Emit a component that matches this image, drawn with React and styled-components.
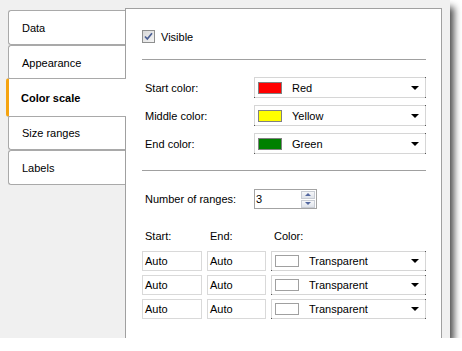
import React from "react";
import styled, { createGlobalStyle } from "styled-components";

const Global = createGlobalStyle`
  html, body { margin: 0; padding: 0; background: #ffffff; }
  body { font-family: "Liberation Sans", Arial, sans-serif; font-size: 11px; color: #000; }
`;

const Window = styled.div`
  width: 450px;
  height: 338px;
  background: #f0f0f0;
  display: flex;
  align-items: stretch;
  box-sizing: border-box;
  padding-top: 8px;
  padding-right: 8px;
  box-shadow: 5px 6px 7px -1px rgba(0, 0, 0, 0.7);
`;

const TabColumn = styled.div`
  width: 117px;
  margin-left: 8px;
  padding-top: 2px;
  display: flex;
  flex-direction: column;
  flex-shrink: 0;
`;

const Tab = styled.div`
  height: ${(p) => (p.$active ? 39 : 35)}px;
  box-sizing: border-box;
  display: flex;
  align-items: center;
  background: #ffffff;
  border: 1px solid #a9a9a9;
  border-right: none;
  border-radius: 3px 0 0 3px;
  padding-left: 13px;
  font-size: 11px;
  ${(p) =>
    p.$active &&
    `
    position: relative;
    z-index: 1;
    margin: -2px -1px -2px -2px;
    border-left: 3px solid #f5a30f;
    padding-left: 12px;
    font-weight: bold;
  `}
`;

const Panel = styled.div`
  flex: 1;
  background: #ffffff;
  border: 1px solid #a0a0a0;
  border-bottom: none;
  padding: 21px 15px 0 16px;
  display: flex;
  flex-direction: column;
`;

const CheckRow = styled.label`
  display: flex;
  align-items: center;
  gap: 6px;
  height: 13px;
`;

const CheckBox = styled.span`
  width: 13px;
  height: 13px;
  box-sizing: border-box;
  border: 1px solid #8e8f8f;
  background: linear-gradient(135deg, #d8d8d8, #f4f4f4);
  display: flex;
  align-items: center;
  justify-content: center;
`;

const Separator = styled.div`
  height: 1px;
  background: #a0a0a0;
  margin-top: ${(p) => p.$top}px;
`;

const ColorRows = styled.div`
  display: flex;
  flex-direction: column;
  gap: 7px;
  margin-top: 17px;
`;

const FieldRow = styled.div`
  display: flex;
  align-items: center;
  height: ${(p) => p.$h || 21}px;
  margin-top: ${(p) => p.$top || 0}px;
`;

const Label = styled.span`
  width: 109px;
  padding-left: 3px;
  flex-shrink: 0;
`;

const Dropdown = styled.div`
  position: relative;
  flex: 1;
  height: 100%;
  box-sizing: border-box;
  border: 1px solid #d6d6d6;
  display: flex;
  align-items: center;
  padding: 0 6px 0 3px;
  &::before, &::after {
    content: "";
    position: absolute;
    bottom: -1px;
    width: 1px;
    height: 1px;
    background: #555;
  }
  &::before { left: -1px; }
  &::after { right: -1px; box-shadow: 0 -${(p) => p.$h || 20}px 0 #555; }
`;

const Swatch = styled.span`
  width: 24px;
  height: 12px;
  box-sizing: border-box;
  border: 1px solid ${(p) => (p.$color === "#ffffff" ? "#a0a0a0" : "#808080")};
  background: ${(p) => p.$color};
  flex-shrink: 0;
`;

const DropText = styled.span`
  margin-left: 10px;
  flex: 1;
`;

const Arrow = styled.span`
  width: 0;
  height: 0;
  border-left: 4px solid transparent;
  border-right: 4px solid transparent;
  border-top: 4px solid #000;
`;

const SpinBox = styled.div`
  width: 63px;
  height: 20px;
  box-sizing: border-box;
  border: 1px solid #a3a3a3;
  display: flex;
  align-items: center;
  padding: 0 1px 0 1px;
`;

const SpinValue = styled.span`
  flex: 1;
`;

const SpinButtons = styled.div`
  display: flex;
  flex-direction: column;
  gap: 1px;
  width: 14px;
`;

const SpinButton = styled.span`
  height: 8px;
  box-sizing: border-box;
  border: 1px solid #c8ccd4;
  background: linear-gradient(#f6f7f9, #dfe3ea);
  display: flex;
  align-items: center;
  justify-content: center;
`;

const SpinArrow = styled.span`
  width: 0;
  height: 0;
  border-left: 3px solid transparent;
  border-right: 3px solid transparent;
  ${(p) => (p.$up ? "border-bottom: 3px solid #5468a0;" : "border-top: 3px solid #5468a0;")}
`;

const RangeGrid = styled.div`
  display: grid;
  grid-template-columns: 60px 59px 1fr;
  column-gap: 5px;
  row-gap: 4px;
  margin-top: ${(p) => p.$top}px;
  grid-auto-rows: ${(p) => p.$rowH}px;
`;

const Header = styled.span`
  padding-left: 3px;
  display: flex;
  align-items: center;
`;

const TextBox = styled.div`
  box-sizing: border-box;
  border: 1px solid #d9d9d9;
  display: flex;
  align-items: center;
  padding-left: 2px;
`;

const tabs = ["Data", "Appearance", "Color scale", "Size ranges", "Labels"];
const colors = [
  { label: "Start color:", color: "#ff0000", name: "Red" },
  { label: "Middle color:", color: "#ffff00", name: "Yellow" },
  { label: "End color:", color: "#008000", name: "Green" },
];

export default function App() {
  return (
    <>
      <Global />
      <Window>
        <TabColumn>
          {tabs.map((t) => (
            <Tab key={t} $active={t === "Color scale"}>
              {t}
            </Tab>
          ))}
        </TabColumn>
        <Panel>
          <CheckRow>
            <CheckBox>
              <svg width="11" height="11" viewBox="0 0 11 11">
                <path d="M2 5.5 L4.3 8 L9 2.2" fill="none" stroke="#4b5f93" strokeWidth="1.7" />
              </svg>
            </CheckBox>
            Visible
          </CheckRow>
          <Separator $top={16} />
          <ColorRows>
            {colors.map((c) => (
              <FieldRow key={c.label}>
                <Label>{c.label}</Label>
                <Dropdown $h={20}>
                  <Swatch $color={c.color} />
                  <DropText>{c.name}</DropText>
                  <Arrow />
                </Dropdown>
              </FieldRow>
            ))}
          </ColorRows>
          <Separator $top={16} />
          <FieldRow $h={20} $top={18}>
            <Label>Number of ranges:</Label>
            <SpinBox>
              <SpinValue>3</SpinValue>
              <SpinButtons>
                <SpinButton>
                  <SpinArrow $up />
                </SpinButton>
                <SpinButton>
                  <SpinArrow />
                </SpinButton>
              </SpinButtons>
            </SpinBox>
          </FieldRow>
          <RangeGrid $top={20} $rowH={14}>
            <Header>Start:</Header>
            <Header>End:</Header>
            <Header>Color:</Header>
          </RangeGrid>
          <RangeGrid $top={8} $rowH={20}>
            {[0, 1, 2].map((i) => (
              <React.Fragment key={i}>
                <TextBox>Auto</TextBox>
                <TextBox>Auto</TextBox>
                <Dropdown $h={19}>
                  <Swatch $color="#ffffff" />
                  <DropText>Transparent</DropText>
                  <Arrow />
                </Dropdown>
              </React.Fragment>
            ))}
          </RangeGrid>
        </Panel>
      </Window>
    </>
  );
}
